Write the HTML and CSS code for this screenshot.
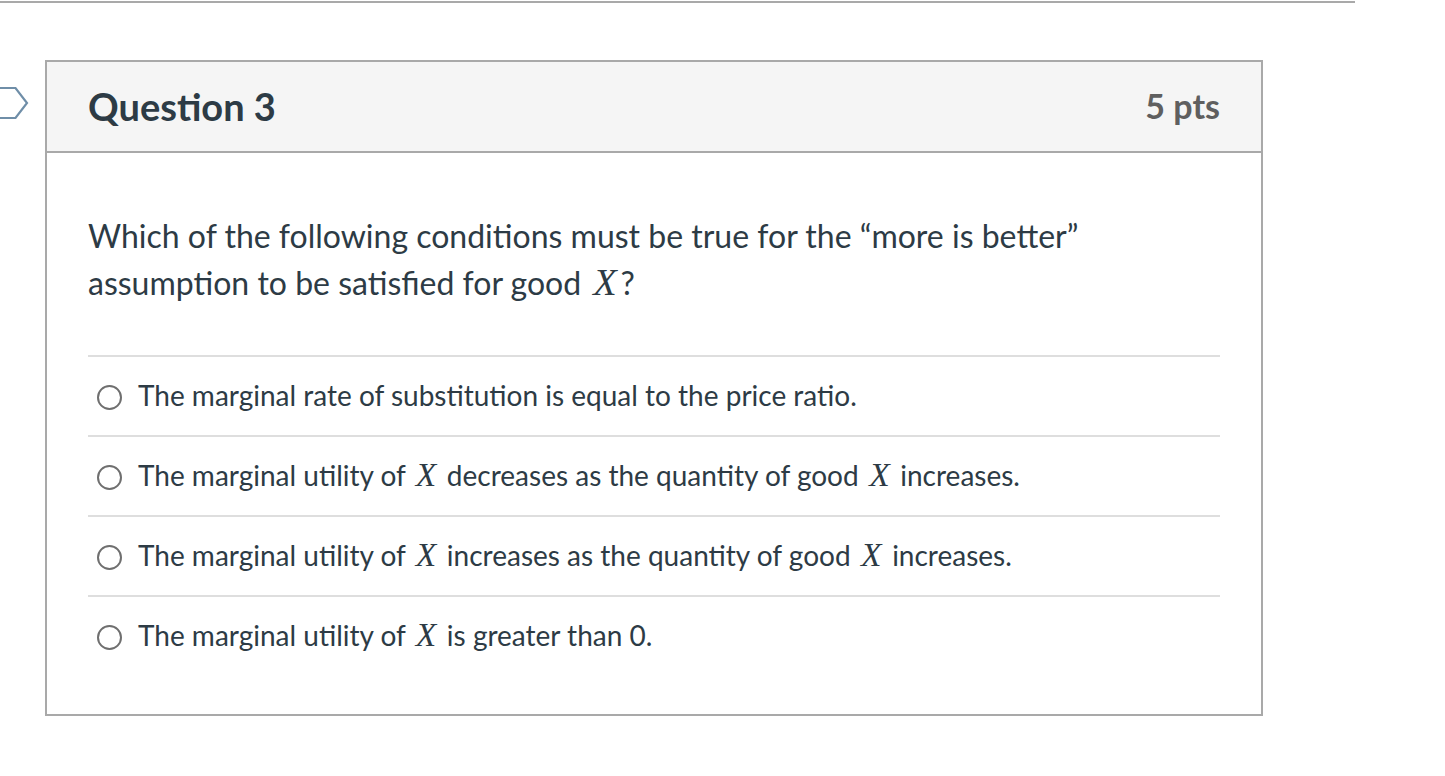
FILE: index.html
```html
<!DOCTYPE html>
<html lang="en">
<head>
<meta charset="utf-8">
<title>Question 3</title>
<link rel="stylesheet" href="styles.css">
</head>
<body>
<div class="topline"></div>
<div class="layout">
  <div class="flag-col">
    <svg class="flag" width="30" height="34" viewBox="0 0 30 34" aria-hidden="true">
      <path d="M-4 2 H15.5 L27 17 L15.5 32 H-4" fill="none" stroke="#6f8ea8" stroke-width="2.2" stroke-linejoin="miter"/>
    </svg>
  </div>
  <div class="card">
    <div class="card-header">
      <h2 class="q-title">Question 3</h2>
      <div class="q-points">5 pts</div>
    </div>
    <div class="card-body">
      <p class="q-text">Which of the following conditions must be true for the “more is better” assumption to be satisfied for good <span class="math">X</span>?</p>
      <div class="answers">
        <label class="answer"><span class="radio"></span><span class="answer-text">The marginal rate of substitution is equal to the price ratio.</span></label>
        <label class="answer"><span class="radio"></span><span class="answer-text">The marginal utility of <span class="math">X</span> decreases as the quantity of good <span class="math">X</span> increases.</span></label>
        <label class="answer"><span class="radio"></span><span class="answer-text">The marginal utility of <span class="math">X</span> increases as the quantity of good <span class="math">X</span> increases.</span></label>
        <label class="answer"><span class="radio"></span><span class="answer-text">The marginal utility of <span class="math">X</span> is greater than 0.</span></label>
      </div>
    </div>
  </div>
</div>
</body>
</html>
```
FILE: styles.css
```css
html, body {
  margin: 0;
  padding: 0;
  background: #ffffff;
}

body {
  font-family: Lato, "Open Sans", "Liberation Sans", sans-serif;
  color: #2d3b45;
}

.topline {
  margin-top: 1px;
  width: 1355px;
  height: 2px;
  background: #a9a9a9;
}

.layout {
  display: flex;
  align-items: flex-start;
  margin-top: 57px;
}

.flag-col {
  width: 45px;
  flex: 0 0 45px;
  padding-top: 26px;
}

.flag {
  display: block;
}

.card {
  width: 1214px;
  border: 2px solid #a9a9a9;
  background: #ffffff;
}

.card-header {
  display: flex;
  align-items: center;
  justify-content: space-between;
  height: 89px;
  padding: 0 41px 0 41px;
  background: #f5f5f5;
  border-bottom: 2px solid #a9a9a9;
}

.q-title {
  margin: 0;
  padding-bottom: 2px;
  font-size: 38px;
  font-weight: 700;
  color: #2d3b45;
  line-height: 1;
}

.q-points {
  padding-bottom: 2px;
  font-size: 34px;
  font-weight: 700;
  color: #5f5f5f;
  line-height: 1;
}

.card-body {
  padding: 59px 41px 39px 41px;
}

.q-text {
  margin: 0 0 49px 0;
  font-size: 32px;
  line-height: 47px;
}

.math {
  font-family: "Liberation Serif", "DejaVu Serif", serif;
  font-style: italic;
  font-size: 1.2em;
  line-height: 1;
  padding: 0 0.1em 0 0.1em;
}

.answer {
  display: flex;
  align-items: center;
  box-sizing: border-box;
  height: 80px;
  border-top: 2px solid #dedede;
  padding: 0 0 3px 9px;
  font-size: 28px;
  line-height: 36px;
}

.radio {
  flex: 0 0 auto;
  box-sizing: border-box;
  width: 25px;
  height: 25px;
  border: 2px solid #6f6f6f;
  border-radius: 50%;
  margin-right: 16px;
  margin-top: 5px;
}

.answer-text {
  white-space: nowrap;
}
```
